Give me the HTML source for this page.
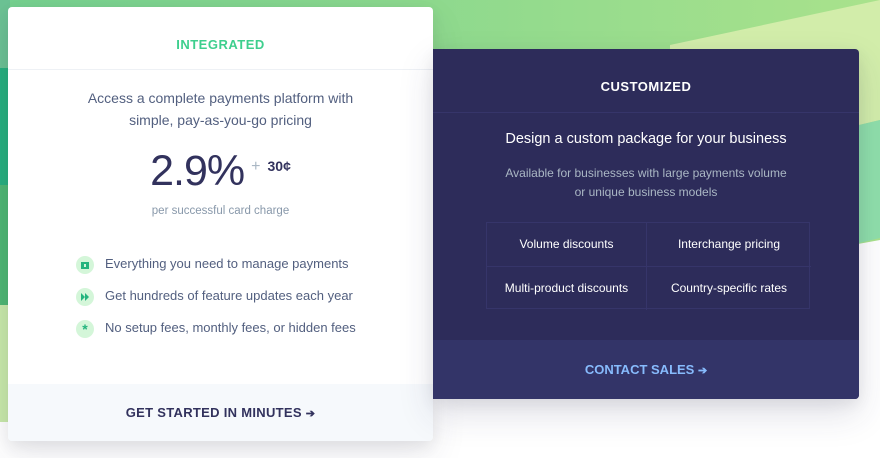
<!DOCTYPE html>
<html><head><style>
*{margin:0;padding:0;box-sizing:border-box}
body{width:880px;height:458px;overflow:hidden;background:#fff;font-family:"Liberation Sans",sans-serif;position:relative}
.bg{position:absolute;left:0;top:0}
.card{position:absolute;border-radius:4px;overflow:hidden}
.l{left:8px;top:7px;width:425px;height:434px;background:#fff;box-shadow:0 15px 35px rgba(50,50,93,.1),0 5px 15px rgba(0,0,0,.07)}
.d{left:433px;top:49px;width:426px;height:350px;background:#2d2c5a;border-radius:0 4px 4px 0;box-shadow:0 15px 35px rgba(50,50,93,.15),0 5px 15px rgba(0,0,0,.07)}
.c{text-align:center}
.g{display:inline-flex;width:18px;height:18px;border-radius:50%;background:#d4f6d9;align-items:center;justify-content:center;vertical-align:middle;margin-right:11px}
</style></head><body>
<svg class="bg" width="880" height="458">
<defs><linearGradient id="t" x1="0" x2="1"><stop offset="0" stop-color="#74d08f"/><stop offset="1" stop-color="#a9e28c"/></linearGradient></defs>
<polygon points="0,0 880,0 880,240 0,400" fill="url(#t)"/>
<polygon points="670,45 880,0 880,120 670,170" fill="#d2edaa"/>
<polygon points="670,170 880,120 880,238 670,288" fill="#8fdfaa"/>
<rect x="0" y="0" width="10" height="68" fill="#6cc294"/>
<rect x="0" y="68" width="10" height="117" fill="#27b07e"/>
<rect x="0" y="185" width="10" height="120" fill="#4fb873"/>
<rect x="0" y="305" width="10" height="117" fill="#c9eaaa"/>
<rect x="0" y="422" width="10" height="36" fill="#fff"/>
</svg>
<div class="card l">
 <div class="c" style="height:63px;border-bottom:1px solid #eef1f5;padding-top:30px;color:#3ecf8e;font-size:13px;letter-spacing:.5px;font-weight:bold">INTEGRATED</div>
 <div class="c" style="margin-top:17px;color:#525f7f;font-size:14px;line-height:22px">Access a complete payments platform with<br>simple, pay-as-you-go pricing</div>
 <div class="c" style="margin-top:16px;height:50px;color:#32325d"><span style="font-size:43px;letter-spacing:-1px">2.9%</span><span style="font-size:16px;color:#aab7c4;vertical-align:14px;margin:0 7px">+</span><span style="font-size:14px;vertical-align:14px;font-weight:bold">30¢</span></div>
 <div class="c" style="margin-top:8px;color:#8898aa;font-size:11.5px">per successful card charge</div>
 <div style="position:absolute;left:68px;top:241px;color:#525f7f;font-size:13px;line-height:32px">
  <div><span class="g"><svg width="10" height="10"><rect x="1" y="2" width="8" height="7" fill="#24b47e"/><rect x="4" y="4" width="2" height="3" fill="#d4f6d9"/></svg></span>Everything you need to manage payments</div>
  <div><span class="g"><svg width="10" height="10"><path d="M1 1L5 5L1 9ZM5 1L9 5L5 9Z" fill="#24b47e"/></svg></span>Get hundreds of feature updates each year</div>
  <div><span class="g" style="color:#24b47e;font-size:14px;font-weight:bold">*</span>No setup fees, monthly fees, or hidden fees</div>
 </div>
 <div class="c" style="position:absolute;left:0;right:0;bottom:0;height:57px;background:#f6f9fc;padding-top:21px;color:#32325d;font-weight:bold;font-size:13px;letter-spacing:.3px">GET STARTED IN MINUTES <span style="font-size:11px">&#10132;</span></div>
</div>
<div class="card d">
 <div class="c" style="height:64px;border-bottom:1px solid #36356a;padding-top:30px;color:#fff;font-size:13px;letter-spacing:.5px;font-weight:bold">CUSTOMIZED</div>
 <div class="c" style="margin-top:18px;color:#fff;font-size:14.5px">Design a custom package for your business</div>
 <div class="c" style="margin-top:17px;color:#aab7c4;font-size:12px;line-height:19px">Available for businesses with large payments volume<br>or unique business models</div>
 <div style="position:absolute;left:53px;top:173px;width:324px;height:87px;border:1px solid #36356a;display:grid;grid-template-columns:160px 164px;grid-template-rows:44px 43px;color:#fff;font-size:12px">
  <div class="c" style="border-right:1px solid #36356a;border-bottom:1px solid #36356a;line-height:43px">Volume discounts</div>
  <div class="c" style="border-bottom:1px solid #36356a;line-height:43px">Interchange pricing</div>
  <div class="c" style="border-right:1px solid #36356a;line-height:43px">Multi-product discounts</div>
  <div class="c" style="line-height:43px">Country-specific rates</div>
 </div>
 <div class="c" style="position:absolute;left:0;right:0;bottom:0;height:59px;background:#333468;padding-top:22px;color:#87bbfd;font-weight:bold;font-size:13px">CONTACT SALES <span style="font-size:11px">&#10132;</span></div>
</div>
</body></html>
